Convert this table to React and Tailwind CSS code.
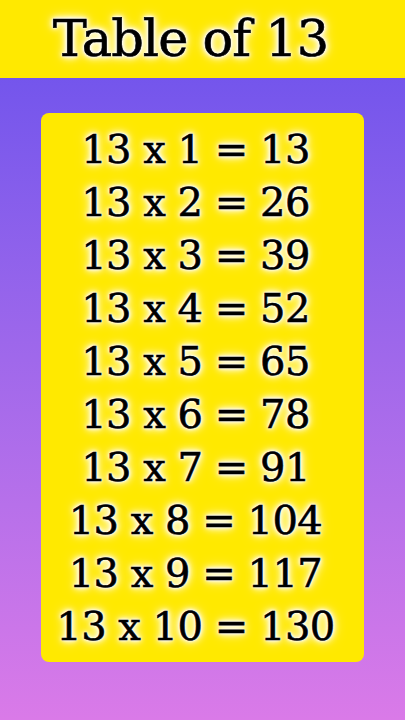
const rows = [1, 2, 3, 4, 5, 6, 7, 8, 9, 10]

const glow = "[text-shadow:0_0_1px_#fff,0_0_2px_#fff,0_0_3px_#fff,0_0_4px_#fff,0_0_6px_#fff,0_0_9px_#fff,0_0_13px_#fff] [-webkit-text-stroke:0.6px_#000]"

function App() {
  return (
    <div className="w-[405px] h-[720px] flex flex-col bg-gradient-to-b from-[#684fec] to-[#da7ae8] font-['DejaVu_Serif',serif] text-black overflow-hidden">
      <div className="h-[78px] bg-[#ffe900] flex items-center justify-center pr-[24px] pb-[2px] shrink-0">
        <h1 className={`text-[51px] leading-none tracking-[-1px] ${glow}`}>Table of 13</h1>
      </div>
      <div className="px-[41px] pt-[35px]">
        <div className="h-[549px] bg-[#ffe900] rounded-[8px] flex flex-col pt-[9px] pr-[14px]">
          {rows.map((n) => (
            <div key={n} className={`h-[53px] flex items-center justify-center text-[40px] leading-none tracking-[-0.5px] whitespace-nowrap ${glow}`}>
              13 x {n} = {13 * n}
            </div>
          ))}
        </div>
      </div>
    </div>
  )
}
export default App
